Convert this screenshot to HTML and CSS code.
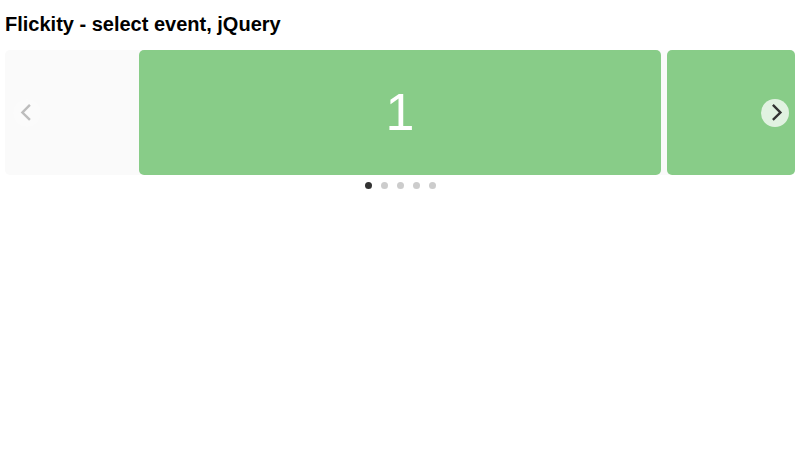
FILE: index.html
```html
<!DOCTYPE html>
<html lang="en">
<head>
    <meta charset="UTF-8">
    <meta name="viewport" content="width=device-width, initial-scale=1.0">
    <title>Flickity - select event, jQuery</title>
    <link rel="stylesheet" href="styles.css">
</head>
<body>
    <h1 class="page-title">Flickity - select event, jQuery</h1>

    <div class="carousel">
        <div class="flickity-viewport">
            <div class="flickity-slider">
                <div class="carousel-cell is-selected">1</div>
                <div class="carousel-cell">2</div>
                <div class="carousel-cell">3</div>
                <div class="carousel-cell">4</div>
                <div class="carousel-cell">5</div>
            </div>
        </div>

        <button class="flickity-button previous" disabled aria-label="Previous">
            <svg viewBox="0 0 100 100"><path d="M 10,50 L 60,100 L 70,90 L 30,50 L 70,10 L 60,0 Z"></path></svg>
        </button>
        <button class="flickity-button next" aria-label="Next">
            <svg viewBox="0 0 100 100"><path d="M 10,50 L 60,100 L 70,90 L 30,50 L 70,10 L 60,0 Z" transform="translate(100, 100) rotate(180)"></path></svg>
        </button>
    </div>

    <ol class="flickity-page-dots">
        <li class="dot is-selected"></li>
        <li class="dot"></li>
        <li class="dot"></li>
        <li class="dot"></li>
        <li class="dot"></li>
    </ol>
</body>
</html>
```

FILE: styles.css
```css
body {
    font-family: 'Liberation Sans', Arial, sans-serif;
    margin: 5px;
    background: white;
    color: #000;
}
.page-title {
    font-size: 20px;
    font-weight: bold;
    margin: 8px 0 14px;
    line-height: 23px;
}
.carousel {
    position: relative;
    background: #FAFAFA;
    border-radius: 5px;
}
.flickity-viewport {
    overflow: hidden;
    border-radius: 5px;
}
.flickity-slider {
    display: flex;
}
.carousel-cell {
    flex: 0 0 66%;
    height: 125px;
    margin-right: 6px;
    background: #8C8;
    border-radius: 5px;
    color: white;
    font-size: 52px;
    line-height: 125px;
    text-align: center;
}
/* selected cell is centred in the viewport */
.carousel-cell:first-child {
    margin-left: 17%;
}
.flickity-button {
    position: absolute;
    top: 50%;
    width: 28px;
    height: 28px;
    margin-top: -14px;
    padding: 0;
    border: none;
    border-radius: 50%;
    background: hsla(0, 0%, 100%, 0.75);
    cursor: pointer;
}
.flickity-button svg {
    position: absolute;
    left: 20%;
    top: 20%;
    width: 60%;
    height: 60%;
    fill: #333;
}
.flickity-button:disabled {
    opacity: 0.3;
    cursor: auto;
}
.flickity-button.previous {
    left: 8px;
}
.flickity-button.next {
    right: 6px;
}
.flickity-page-dots {
    list-style: none;
    margin: 7px 0 0;
    padding: 0;
    display: flex;
    justify-content: center;
}
.dot {
    width: 7px;
    height: 7px;
    margin: 0 4.5px;
    border-radius: 50%;
    background: #333;
    opacity: 0.25;
}
.dot.is-selected {
    opacity: 1;
}
```
